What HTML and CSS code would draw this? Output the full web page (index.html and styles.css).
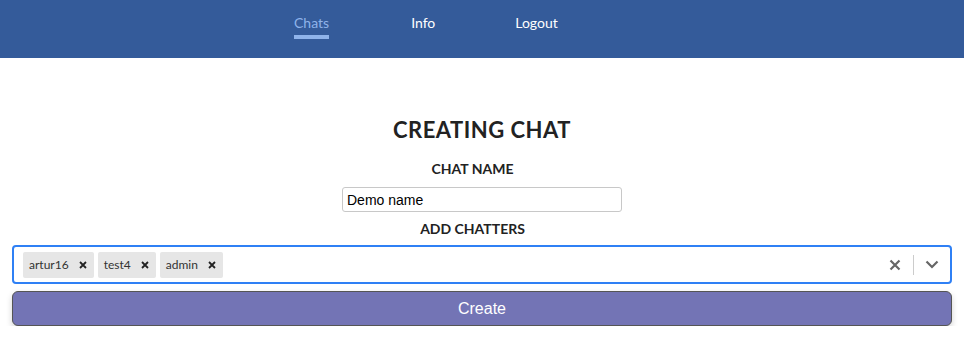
FILE: index.html
```html
<!DOCTYPE html>
<html>
<head>
<meta charset="utf-8">
<link rel="stylesheet" href="styles.css">
</head>
<body>
<header class="nav">
  <a class="nav-link active">Chats</a>
  <a class="nav-link">Info</a>
  <a class="nav-link logout">Logout</a>
</header>
<main class="page">
  <h1 class="title">CREATING CHAT</h1>
  <div class="label">CHAT NAME</div>
  <div class="input-row"><input class="text-input" type="text" value="Demo name"></div>
  <div class="label label-2">ADD CHATTERS</div>
  <div class="select">
    <div class="values">
      <div class="chip"><span class="chip-label">artur16</span><span class="chip-x"><svg width="8" height="8" viewBox="0 0 8 8"><path d="M1 1L7 7M7 1L1 7" stroke="#222" stroke-width="1.8"/></svg></span></div>
      <div class="chip"><span class="chip-label">test4</span><span class="chip-x"><svg width="8" height="8" viewBox="0 0 8 8"><path d="M1 1L7 7M7 1L1 7" stroke="#222" stroke-width="1.8"/></svg></span></div>
      <div class="chip"><span class="chip-label">admin</span><span class="chip-x"><svg width="8" height="8" viewBox="0 0 8 8"><path d="M1 1L7 7M7 1L1 7" stroke="#222" stroke-width="1.8"/></svg></span></div>
    </div>
    <div class="indicators">
      <span class="ind"><svg width="12" height="12" viewBox="0 0 12 12"><path d="M1.5 1.5L10.5 10.5M10.5 1.5L1.5 10.5" stroke="#666" stroke-width="2.2"/></svg></span>
      <span class="sep"></span>
      <span class="ind"><svg width="14" height="9" viewBox="0 0 14 9"><path d="M1.5 1.5L7 7L12.5 1.5" fill="none" stroke="#666" stroke-width="2.2"/></svg></span>
    </div>
  </div>
  <button class="create">Create</button>
</main>
</body>
</html>
```
FILE: styles.css
```css
html, body { margin: 0; padding: 0; background: #fff; }
body { font-family: Lato, "Liberation Sans", sans-serif; color: #222; }

.nav {
  height: 58px;
  background: #345b9a;
  display: flex;
  align-items: flex-start;
  padding-left: 294px;
  gap: 82px;
  box-sizing: border-box;
}
.nav-link {
  font-size: 14px;
  color: #fff;
  padding-top: 14px;
  line-height: 18px;
  cursor: pointer;
}
.nav-link.active {
  color: #8fb3ea;
  border-bottom: 4px solid #8fb3ea;
  padding-bottom: 3px;
}
.nav-link.logout { margin-left: -2px; }

.page { padding: 0 12px; display: flex; flex-direction: column; align-items: stretch; }
.title {
  margin: 59px 0 0;
  font-size: 22px;
  font-weight: 700;
  text-align: center;
  line-height: 26px;
  letter-spacing: 0.5px;
  color: #222;
}
.label {
  text-align: center;
  font-weight: 700;
  font-size: 14px;
  line-height: 17px;
  margin-top: 17px;
  padding-right: 19px;
  color: #222;
}
.label-2 { margin-top: 8px; }
.input-row { display: flex; justify-content: center; margin-top: 10px; }
.text-input {
  width: 280px;
  height: 25px;
  box-sizing: border-box;
  border: 1px solid #c8c8c8;
  border-radius: 3px;
  font-family: "Liberation Sans", Arial, sans-serif;
  font-size: 14px;
  padding: 1px 4px;
  color: #000;
}
.select {
  margin-top: 8px;
  height: 39px;
  box-sizing: border-box;
  border: 2px solid #2f80f5;
  border-radius: 4px;
  display: flex;
  align-items: center;
  padding: 0 0 0 9px;
}
.values { flex: 1; display: flex; gap: 4px; }
.chip {
  background: #e6e6e6;
  border-radius: 2px;
  height: 26px;
  display: flex;
  align-items: center;
  font-size: 12px;
  color: #333;
}
.chip-label { padding: 0 6px 0 6px; }
.chip-x { display: flex; align-items: center; padding: 0 7px 0 4px; }
.indicators { display: flex; align-items: center; height: 100%; }
.ind { display: flex; align-items: center; justify-content: center; width: 36px; }
.sep { width: 1px; height: 20px; background: #ccc; }
.create {
  margin-top: 7px;
  height: 35px;
  background: #7374b5;
  border: 1px solid #555;
  border-radius: 6px;
  color: #fff;
  font-family: "Liberation Sans", Arial, sans-serif;
  font-size: 16px;
  box-shadow: 0 3px 6px rgba(0,0,0,0.18);
}
```
